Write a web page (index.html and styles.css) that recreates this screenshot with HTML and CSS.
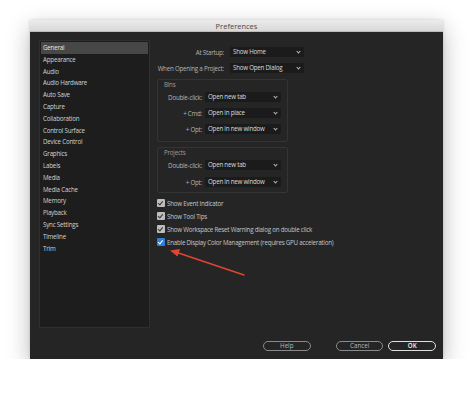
FILE: index.html
```html
<!DOCTYPE html>
<html lang="en">
<head>
  <meta charset="UTF-8" />
  <title>Preferences</title>
  <link rel="stylesheet" href="styles.css">
</head>
<body>
  <div class="window">
    <div class="titlebar">Preferences</div>

    <div class="dialog">
      <div class="main">
        <ul class="sidebar">
          <li class="active">General</li>
          <li>Appearance</li>
          <li>Audio</li>
          <li>Audio Hardware</li>
          <li>Auto Save</li>
          <li>Capture</li>
          <li>Collaboration</li>
          <li>Control Surface</li>
          <li>Device Control</li>
          <li>Graphics</li>
          <li>Labels</li>
          <li>Media</li>
          <li>Media Cache</li>
          <li>Memory</li>
          <li>Playback</li>
          <li>Sync Settings</li>
          <li>Timeline</li>
          <li>Trim</li>
        </ul>

        <div class="content">
          <div class="top-rows">
            <label>At Startup:</label>
            <div class="select">Show Home</div>
            <label>When Opening a Project:</label>
            <div class="select">Show Open Dialog</div>
          </div>

          <div class="group bins">
            <div class="group-title">Bins</div>
            <div class="group-rows">
              <label>Double-click:</label>
              <div class="select">Open new tab</div>
              <label>+ Cmd:</label>
              <div class="select">Open in place</div>
              <label>+ Opt:</label>
              <div class="select">Open in new window</div>
            </div>
          </div>

          <div class="group projects">
            <div class="group-title">Projects</div>
            <div class="group-rows">
              <label>Double-click:</label>
              <div class="select">Open new tab</div>
              <label>+ Opt:</label>
              <div class="select">Open in new window</div>
            </div>
          </div>

          <div class="checks">
            <div class="check"><span class="box"></span>Show Event Indicator</div>
            <div class="check"><span class="box"></span>Show Tool Tips</div>
            <div class="check"><span class="box"></span>Show Workspace Reset Warning dialog on double click</div>
            <div class="check"><span class="box blue"></span>Enable Display Color Management (requires GPU acceleration)</div>
          </div>
        </div>
      </div>

      <div class="footer">
        <button class="btn help">Help</button>
        <span class="spacer"></span>
        <button class="btn">Cancel</button>
        <button class="btn ok">OK</button>
      </div>

      <!-- red annotation arrow -->
      <svg class="arrow" width="90" height="40" viewBox="0 0 90 40">
        <line x1="78" y1="32" x2="11" y2="9.5" stroke="#e5442e" stroke-width="1.4" stroke-linecap="round"/>
        <polygon points="4,7.5 14,6 11.5,13.5" fill="#e5442e"/>
      </svg>
    </div>
  </div>
</body>
</html>
```

FILE: styles.css
```css
body {
    margin: 0;
    background: #fff;
    font-family: "Open Sans", "DejaVu Sans", sans-serif;
}

.window {
    width: 413px;
    margin: 20px 0 0 30px;
    box-shadow: 0 8px 22px rgba(0, 0, 0, 0.28), 0 0 3px rgba(0, 0, 0, 0.15);
}

.titlebar {
    height: 12px;
    line-height: 12px;
    text-align: center;
    font-size: 7.5px;
    color: #4a4a4a;
    background: linear-gradient(#ececec, #d8d8d8);
    border-bottom: 1px solid #bdbdbd;
    box-sizing: border-box;
}

.dialog {
    position: relative;
    height: 327px;
    background: #252525;
    padding: 8px 7px 0 9px;
    box-sizing: border-box;
}

.main {
    display: flex;
    height: 288px;
}

.sidebar {
    list-style: none;
    margin: 0;
    padding: 1px 1px 0;
    width: 111px;
    background: #1d1d1d;
    border: 1px solid #2f2f2f;
    box-sizing: border-box;
}

.sidebar li {
    height: 11.8px;
    line-height: 11.8px;
    font-size: 6.2px;
    letter-spacing: -0.2px;
    color: #d2d2d2;
    padding-left: 2px;
}

.sidebar li.active {
    background: #474747;
    color: #e8e8e8;
}

.content {
    flex: 1;
    padding-left: 7px;
    font-size: 6.2px;
    letter-spacing: -0.22px;
    color: #b4b4b4;
}

.top-rows,
.group-rows {
    display: grid;
    align-items: center;
    grid-auto-rows: 10px;
}

.top-rows {
    grid-template-columns: 67px 74px;
    column-gap: 6px;
    row-gap: 6px;
    margin-top: 7px;
}

.top-rows label,
.group-rows label {
    display: flex;
    justify-content: flex-end;
    white-space: nowrap;
}

.select {
    position: relative;
    height: 10px;
    line-height: 10px;
    background: #1b1b1b;
    color: #dcdcdc;
    padding-left: 3px;
    border-radius: 1px;
    white-space: nowrap;
}

.select::after {
    content: "";
    position: absolute;
    right: 4px;
    top: 3px;
    width: 2px;
    height: 2px;
    border-right: 1px solid #bbb;
    border-bottom: 1px solid #bbb;
    transform: rotate(45deg);
}

.group {
    width: 131px;
    padding: 0 6px;
    border: 1px solid #343434;
    border-radius: 2px;
    box-sizing: border-box;
}

.group-title {
    height: 9px;
    line-height: 9px;
    color: #9c9c9c;
}

.bins {
    margin-top: 6px;
    height: 63px;
}

.projects {
    margin-top: 5px;
    height: 46px;
}

.group-rows {
    grid-template-columns: 38px 76px;
    column-gap: 3px;
    row-gap: 6px;
    margin-top: 3px;
}

.projects .group-rows {
    row-gap: 7px;
}

.checks {
    margin-top: 3.5px;
}

.check {
    display: flex;
    align-items: center;
    height: 13px;
    color: #c6c6c6;
    white-space: nowrap;
}

.box {
    position: relative;
    width: 7.5px;
    height: 7.5px;
    margin-right: 2.5px;
    background: #bdbdbd;
    border-radius: 1px;
}

.box::after {
    content: "";
    position: absolute;
    left: 2.4px;
    top: 0.7px;
    width: 1.6px;
    height: 3.8px;
    border-right: 1.2px solid #333;
    border-bottom: 1.2px solid #333;
    transform: rotate(40deg);
}

.box.blue {
    background: #2f7de1;
}

.box.blue::after {
    border-color: #fff;
}

.footer {
    display: flex;
    align-items: center;
    margin-top: 13px;
    padding-left: 224px;
}

.spacer {
    width: 21px;
}

.btn {
    width: 49px;
    height: 10px;
    padding: 0;
    margin-right: 5px;
    font-family: inherit;
    font-size: 6.2px;
    line-height: 8px;
    color: #b8b8b8;
    background: transparent;
    border: 1px solid #8a8a8a;
    border-radius: 5px;
}

.btn.ok {
    margin-right: 0;
    color: #f0f0f0;
    font-weight: 600;
    border-color: #e0e0e0;
}

.arrow {
    position: absolute;
    left: 136px;
    top: 211px;
}
```
